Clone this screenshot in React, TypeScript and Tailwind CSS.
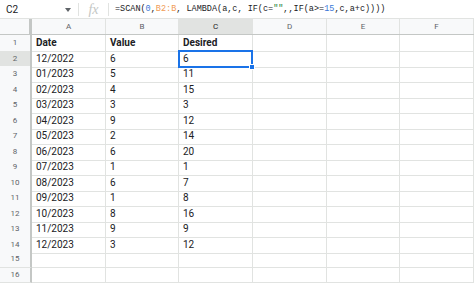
const rows: [string, string, string][] = [
  ['Date', 'Value', 'Desired'],
  ['12/2022', '6', '6'],
  ['01/2023', '5', '11'],
  ['02/2023', '4', '15'],
  ['03/2023', '3', '3'],
  ['04/2023', '9', '12'],
  ['05/2023', '2', '14'],
  ['06/2023', '6', '20'],
  ['07/2023', '1', '1'],
  ['08/2023', '6', '7'],
  ['09/2023', '1', '8'],
  ['10/2023', '8', '16'],
  ['11/2023', '9', '9'],
  ['12/2023', '3', '12'],
  ['', '', ''],
  ['', '', ''],
]

const cols = ['A', 'B', 'C', 'D', 'E', 'F']
const gridCols = 'grid grid-cols-[32px_74px_73px_74px_74px_73px_1fr]'

function FormulaBar() {
  return (
    <div className="flex h-[19px] items-center border-b border-[#e1e3e1] bg-white text-[#202124]">
      <div className="flex w-[78px] items-center justify-between pl-[6px] pr-[7px] text-[10px]">
        <span>C2</span>
        <svg width="6" height="4" viewBox="0 0 6 4" className="mt-px">
          <path d="M0 0h6L3 4z" fill="#5f6368" />
        </svg>
      </div>
      <div className="h-[13px] w-px bg-[#e1e3e1]" />
      <div className="flex w-[29px] justify-center font-['Liberation_Serif',serif] text-[14px] italic text-[#c4c7c5]">
        fx
      </div>
      <div className="h-[13px] w-px bg-[#e1e3e1]" />
      <div className="whitespace-pre pl-[6px] font-['Liberation_Mono',monospace] text-[8.5px] text-[#202124]">
        =SCAN(<span className="text-[#3c78d8]">0</span>,<span className="text-[#f09b55]">B2:B</span>, LAMBDA(a,c, IF(c=<span className="text-[#188038]">""</span>,,IF(a&gt;=<span className="text-[#3c78d8]">15</span>,c,a+c))))
      </div>
    </div>
  )
}

export default function App() {
  return (
    <div className="h-[285px] w-[474px] overflow-hidden bg-white font-['Roboto',sans-serif]">
      <FormulaBar />
      {/* column letters */}
      <div className={`${gridCols} h-[16px] border-b border-[#c4c7c5] bg-[#f8f9fa] text-[8px] text-[#5f6368]`}>
        <div className="border-r-[3px] border-[#c4c7c5]" />
        {cols.map(c => (
          <div
            key={c}
            className={`flex items-center justify-center border-r border-[#e1e3e1] ${
              c === 'C' ? 'bg-[#e1e3e1] text-[#202124]' : ''
            }`}
          >
            {c}
          </div>
        ))}
      </div>
      {rows.map((r, i) => (
        <div key={i} className={`${gridCols} h-[15.5px] text-[10px] text-[#202124]`}>
          <div
            className={`flex items-center justify-center border-b border-r-[2px] border-b-[#e1e3e1] border-r-[#c4c7c5] text-[8px] text-[#5f6368] ${
              i === 1 ? 'bg-[#e1e3e1]' : 'bg-[#f8f9fa]'
            }`}
          >
            {i + 1}
          </div>
          {[0, 1, 2, 3, 4, 5].map(j => (
            <div
              key={j}
              className={`relative flex items-end border-b border-r border-[#e1e3e1] pb-px pl-[4px] ${
                i === 0 ? 'font-bold' : ''
              }`}
            >
              {j < 3 ? r[j] : ''}
              {i === 1 && j === 2 && (
                <div className="absolute -left-px -top-px bottom-[-1px] right-[-1px] z-10 border-2 border-[#1a73e8]">
                  <div className="absolute -bottom-[4px] -right-[4px] h-[6px] w-[6px] border border-white bg-[#1a73e8]" />
                </div>
              )}
            </div>
          ))}
        </div>
      ))}
    </div>
  )
}
